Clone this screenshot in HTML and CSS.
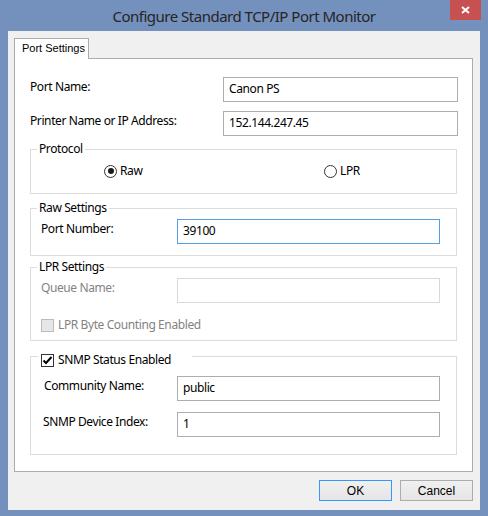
FILE: index.html
```html
<!DOCTYPE html>
<html lang="en">
<head>
    <meta charset="UTF-8">
    <title>Configure Standard TCP/IP Port Monitor</title>
    <link rel="stylesheet" href="styles.css">
</head>
<body>

<div class="window">
    <!-- Barre de titre -->
    <div class="titlebar">
        <span class="title">Configure Standard TCP/IP Port Monitor</span>
        <button class="close" aria-label="Close">
            <svg width="9" height="8" viewBox="0 0 9 8">
                <path d="M1 1 L8 7 M8 1 L1 7" stroke="#fff" stroke-width="2" fill="none"/>
            </svg>
        </button>
    </div>

    <div class="client">
        <div class="tabs">
            <div class="tab">Port Settings</div>
        </div>

        <div class="panel">
            <div class="row first">
                <label for="portName">Port Name:</label>
                <input type="text" id="portName" value="Canon PS" readonly>
            </div>
            <div class="row second">
                <label for="address">Printer Name or IP Address:</label>
                <input type="text" id="address" value="152.144.247.45" readonly>
            </div>

            <fieldset class="group protocol">
                <legend>Protocol</legend>
                <div class="radios">
                    <span class="radio-item raw"><span class="radio checked"></span>Raw</span>
                    <span class="radio-item"><span class="radio"></span>LPR</span>
                </div>
            </fieldset>

            <fieldset class="group raw-settings">
                <legend>Raw Settings</legend>
                <div class="field">
                    <label for="portNumber">Port Number:</label>
                    <input type="text" id="portNumber" class="focused" value="39100" readonly>
                </div>
            </fieldset>

            <fieldset class="group lpr-settings">
                <legend>LPR Settings</legend>
                <div class="field">
                    <label for="queue" class="disabled">Queue Name:</label>
                    <input type="text" id="queue" class="off" disabled>
                </div>
                <div class="check-row disabled">
                    <span class="check off"></span>LPR Byte Counting Enabled
                </div>
            </fieldset>

            <fieldset class="group snmp">
                <legend>
                    <span class="check">
                        <svg width="11" height="11" viewBox="0 0 11 11">
                            <path d="M1.5 5.5 L4 8 L9.5 2" stroke="#000" stroke-width="2" fill="none"/>
                        </svg>
                    </span>SNMP Status Enabled
                </legend>
                <div class="field community">
                    <label for="community">Community Name:</label>
                    <input type="text" id="community" value="public" readonly>
                </div>
                <div class="field device">
                    <label for="deviceIndex">SNMP Device Index:</label>
                    <input type="text" id="deviceIndex" value="1" readonly>
                </div>
            </fieldset>
        </div>

        <div class="buttons">
            <button class="btn default">OK</button>
            <button class="btn">Cancel</button>
        </div>
    </div>
</div>

</body>
</html>
```

FILE: styles.css
```css
body {
    margin: 0;
    padding: 0;
    background-color: #7490bc;
    font-family: "Noto Sans", sans-serif;
    font-size: 12px;
    letter-spacing: -0.4px;
    color: #000;
}
.window {
    width: 488px;
    height: 516px;
    display: flex;
    flex-direction: column;
}
.titlebar {
    position: relative;
    height: 31px;
    text-align: center;
}
.title {
    font-size: 15px;
    letter-spacing: -0.5px;
    line-height: 32px;
    color: #252525;
}
.close {
    position: absolute;
    top: 0;
    right: 7px;
    width: 31px;
    height: 20px;
    padding: 0;
    border: none;
    background-color: #c75050;
    display: flex;
    align-items: center;
    justify-content: center;
}
.client {
    margin: 0 8px;
    height: 479px;
    background-color: #f0f0f0;
    padding: 7px 7px 0 6px;
    box-sizing: border-box;
}
.tabs {
    display: flex;
    height: 20px;
}
.tab {
    width: 75px;
    box-sizing: border-box;
    background: white;
    border: 1px solid #acacac;
    border-bottom: none;
    font-family: "Liberation Sans", sans-serif;
    font-size: 11px;
    letter-spacing: 0;
    line-height: 19px;
    padding-left: 7px;
    position: relative;
    z-index: 1;
    height: 21px;
}
.panel {
    height: 414px;
    box-sizing: border-box;
    background: white;
    border: 1px solid #acacac;
    padding: 18px 13px 0 15px;
}
.row, .field {
    display: flex;
    align-items: flex-start;
}
label {
    line-height: 16px;
    padding-top: 2px;
    flex-shrink: 0;
}
.row label {
    width: 193px;
}
.row.second {
    margin-top: 9px;
}
input {
    height: 25px;
    box-sizing: border-box;
    border: 1px solid #abadb3;
    padding: 0 5px 2px;
    font-family: "Noto Sans", sans-serif;
    font-size: 12px;
    letter-spacing: -0.4px;
    color: #000;
    background: white;
    outline: none;
    flex-shrink: 0;
}
.row input {
    width: 235px;
}
.field input {
    width: 263px;
}
input.focused {
    border-color: #569de5;
}
input.off {
    border-color: #d9d9d9;
}
.group {
    margin: 0;
    border: 1px solid #dcdcdc;
    padding: 0 0 0 10px;
    width: 427px;
    box-sizing: border-box;
}
legend {
    margin-left: -4px;
    padding: 0 2px;
    line-height: 16px;
}
.protocol {
    margin-top: 5px;
    padding: 6px 0 14px 73px;
}
.protocol legend {
    margin-left: -67px;
}
.radios {
    display: flex;
    line-height: 16px;
}
.radio-item {
    display: flex;
    align-items: center;
}
.radio-item.raw {
    width: 220px;
}
.radio {
    width: 13px;
    height: 13px;
    box-sizing: border-box;
    border: 1px solid #333;
    border-radius: 50%;
    margin-right: 3px;
    background: white;
    position: relative;
}
.radio.checked::after {
    content: "";
    position: absolute;
    left: 2.5px;
    top: 2.5px;
    width: 6px;
    height: 6px;
    border-radius: 50%;
    background: #1a1a1a;
}
.field label {
    width: 136px;
}
.raw-settings {
    margin-top: 6px;
    padding-bottom: 11px;
}
.raw-settings .field {
    margin-top: 3px;
}
.lpr-settings {
    margin-top: 3px;
    padding-bottom: 7px;
}
.lpr-settings .field {
    margin-top: 3px;
}
.disabled {
    color: #838383;
}
.check-row {
    display: flex;
    align-items: center;
    line-height: 16px;
    margin-top: 14px;
}
.check {
    width: 13px;
    height: 13px;
    box-sizing: border-box;
    border: 1px solid #333;
    background: white;
    margin-right: 4px;
    display: inline-flex;
    align-items: center;
    justify-content: center;
}
.check.off {
    border-color: #bcbcbc;
    background: #e6e6e6;
}
.snmp {
    margin-top: 4px;
    padding-bottom: 17px;
}
.snmp legend {
    display: flex;
    align-items: center;
    padding: 7px 21px 0 3px;
    margin-left: -3px;
}
.snmp .community {
    margin-top: 8px;
}
.snmp .field label {
    padding-left: 3px;
    width: 133px;
}
.snmp .device {
    margin-top: 11px;
}
.snmp .device label {
    padding-left: 2px;
    width: 134px;
}
.buttons {
    display: flex;
    justify-content: flex-end;
    gap: 8px;
    margin-top: 8px;
}
.btn {
    width: 73px;
    height: 21px;
    border: 1px solid #acacac;
    background: linear-gradient(#f0f0f0, #e5e5e5);
    font-family: "Liberation Sans", sans-serif;
    font-size: 12px;
    letter-spacing: 0;
    color: #000;
    padding: 0;
}
.btn.default {
    border-color: #3399ff;
}
```
